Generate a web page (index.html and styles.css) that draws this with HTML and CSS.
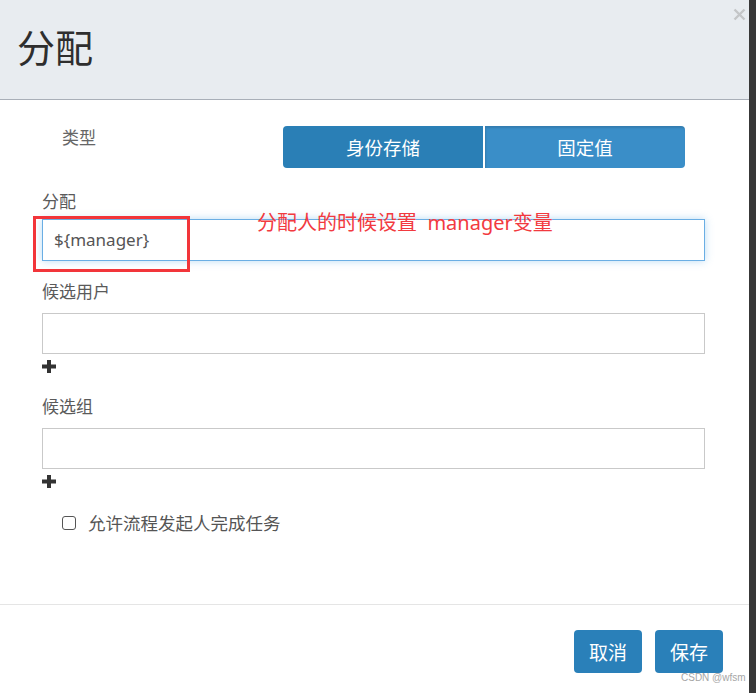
FILE: index.html
```html
<!DOCTYPE html>
<html lang="zh-CN">
<head>
<meta charset="utf-8">
<title>分配</title>
<link rel="stylesheet" href="styles.css">
</head>
<body>
<div class="modal">
  <div class="modal-header">
    <h1 class="title">分配</h1>
    <svg class="close" width="13" height="13" viewBox="0 0 13 13"><path d="M1.5 1.5 L11.5 11.5 M11.5 1.5 L1.5 11.5" stroke="#c4c6c8" stroke-width="2.4" fill="none"/></svg>
  </div>
  <div class="modal-body">
    <div class="type-row">
      <span class="type-label">类型</span>
      <div class="btn-group">
        <span class="seg seg-active">身份存储</span>
        <span class="seg seg-alt">固定值</span>
      </div>
    </div>

    <div class="field field-first">
      <label class="field-label">分配</label>
      <div class="input input-focus">${manager}</div>
      <div class="red-box"></div>
      <div class="note">分配人的时候设置&nbsp;&nbsp;manager变量</div>
    </div>

    <div class="field">
      <label class="field-label">候选用户</label>
      <div class="input"></div>
      <div class="plus-row"><svg width="14" height="13" viewBox="0 0 14 13"><rect x="5" y="0" width="4" height="13" fill="#333"/><rect x="0" y="4.5" width="14" height="4" fill="#333"/></svg></div>
    </div>

    <div class="field">
      <label class="field-label">候选组</label>
      <div class="input"></div>
      <div class="plus-row"><svg width="14" height="13" viewBox="0 0 14 13"><rect x="5" y="0" width="4" height="13" fill="#333"/><rect x="0" y="4.5" width="14" height="4" fill="#333"/></svg></div>
    </div>

    <div class="check-row">
      <span class="checkbox"></span>
      <span class="check-label">允许流程发起人完成任务</span>
    </div>
  </div>
  <div class="modal-footer">
    <span class="btn">取消</span>
    <span class="btn">保存</span>
  </div>
  <span class="watermark">CSDN @wfsm</span>
</div>
</body>
</html>
```
FILE: styles.css
```css
* { box-sizing: border-box; }
html, body { margin: 0; padding: 0; }
body {
  background: #383838;
  font-family: "Noto Sans", "Noto Sans CJK SC", sans-serif;
  width: 756px;
  height: 693px;
  overflow: hidden;
}
.modal {
  position: relative;
  width: 749px;
  height: 693px;
  background: #fff;
  display: flex;
  flex-direction: column;
}
.modal-header {
  position: relative;
  height: 100px;
  background: #e8ecf0;
  border-bottom: 1px solid #a9afb8;
  padding: 25px 0 0 17px;
}
.title {
  margin: 0;
  font-family: "Noto Sans CJK SC", sans-serif;
  font-weight: 400;
  font-size: 38px;
  line-height: 42px;
  color: #2e2e2e;
}
.close {
  position: absolute;
  top: 8px;
  left: 733px;
}
.modal-body {
  flex: 1;
  padding: 0 44px 0 42px;
}
.type-row {
  display: flex;
  align-items: flex-start;
  margin-top: 26px;
}
.type-label {
  width: 241px;
  padding-left: 20px;
  font-size: 17px;
  line-height: 24px;
  color: #666;
}
.btn-group {
  display: flex;
  gap: 2px;
}
.seg {
  width: 200px;
  height: 42px;
  display: flex;
  align-items: center;
  justify-content: center;
  color: #fff;
  font-size: 18.5px;
}
.seg-active {
  background: #2a7fb6;
  border-radius: 4px 0 0 4px;
}
.seg-alt {
  background: #3a8ec8;
  border-radius: 0 4px 4px 0;
  box-shadow: inset 1px 2px 2px rgba(0,0,0,0.12);
}
.field { position: relative; }
.field-first { margin-top: 23px; }
.field-label {
  display: block;
  font-size: 17px;
  line-height: 22px;
  color: #5a5a5a;
  margin-top: 20px;
}
.field-first .field-label { margin-top: 0; }
.input {
  margin-top: 10px;
  height: 41px;
  border: 1px solid #c9c9c9;
  background: #fff;
  padding: 0 11px;
  font-size: 17px;
  line-height: 39px;
  color: #555;
}
.input-focus {
  margin-top: 6px;
  height: 42px;
  line-height: 40px;
  border-color: #6aaee4;
  box-shadow: 0 0 8px rgba(102, 175, 233, 0.45);
}
.red-box {
  position: absolute;
  left: -9px;
  top: 25px;
  width: 157px;
  height: 56px;
  border: 3px solid #f2353a;
}
.note {
  position: absolute;
  left: 215px;
  top: 19px;
  font-size: 20px;
  line-height: 26px;
  color: #f23a3f;
  white-space: nowrap;
}
.plus-row {
  height: 22px;
  padding-top: 6px;
  line-height: 0;
}
.check-row {
  display: flex;
  align-items: center;
  margin-top: 20px;
  padding-left: 20px;
}
.checkbox {
  width: 14px;
  height: 14px;
  border: 1.5px solid #555;
  border-radius: 3px;
  margin-right: 12px;
}
.check-label {
  font-size: 17.5px;
  line-height: 24px;
  color: #555;
}
.modal-footer {
  height: 89px;
  border-top: 1px solid #e5e5e5;
  display: flex;
  justify-content: flex-end;
  align-items: flex-start;
  gap: 13px;
  padding: 25px 26px 0 0;
}
.btn {
  width: 68px;
  height: 43px;
  background: #2a80b9;
  border-radius: 4px;
  color: #fff;
  font-size: 19px;
  display: flex;
  align-items: center;
  justify-content: center;
}
.watermark {
  position: absolute;
  left: 681px;
  top: 672px;
  font-family: "Liberation Sans", sans-serif;
  font-size: 10px;
  color: #a6a6a6;
}
```
